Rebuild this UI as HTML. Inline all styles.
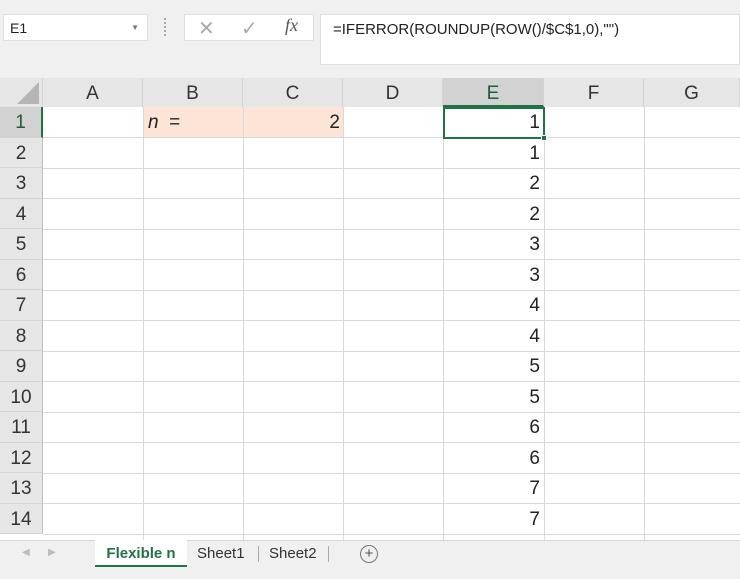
<!DOCTYPE html><html><head><style>
*{margin:0;padding:0;box-sizing:border-box}
body{width:740px;height:579px;overflow:hidden;background:#fff;font-family:"Liberation Sans",Arial,sans-serif;position:relative}
.a{position:absolute}
.ch{position:absolute;top:78px;height:29px;border-right:1px solid #d4d4d4;font-size:19px;color:#333;text-align:center;line-height:31px;background:#e6e6e6}
.rh{position:absolute;left:0;width:43px;height:30.5px;border-bottom:1px solid #d4d4d4;background:#e6e6e6;font-size:19px;color:#333;text-align:center;line-height:31px;border-right:1px solid #bfbfbf}
.vl{position:absolute;top:107px;width:1px;height:433px;background:#dadada}
.hl{position:absolute;left:43px;width:697px;height:1px;background:#dadada}
.num{position:absolute;left:443px;width:97px;text-align:right;font-size:19px;color:#222;line-height:31px}
</style></head><body>
<div class="a" style="left:0;top:0;width:740px;height:78px;background:#f0f0f0"></div>
<div class="a" style="left:3px;top:14px;width:145px;height:27px;background:#fff;border:1px solid #e0e0e0;font-size:14px;line-height:26px;padding-left:6px;color:#222">E1<span style="position:absolute;right:8px;font-size:8px;color:#777">▼</span></div>
<div class="a" style="left:164px;top:18px;width:2px;height:18px;border-left:2px dotted #aaa"></div>
<div class="a" style="left:184px;top:14px;width:130px;height:27px;background:#fff;border:1px solid #e0e0e0"></div>
<div class="a" style="left:198px;top:16px;font-size:20px;color:#aaa">✕</div>
<div class="a" style="left:241px;top:16px;font-size:20px;color:#aaa">✓</div>
<div class="a" style="left:285px;top:15px;font-size:18px;color:#555;font-family:'Liberation Serif',serif;font-style:italic">fx</div>
<div class="a" style="left:320px;top:14px;width:420px;height:51px;background:#fff;border:1px solid #e0e0e0;font-size:15px;padding:6px 0 0 12px;color:#222">=IFERROR(ROUNDUP(ROW()/$C$1,0),"")</div>
<div class="a" style="left:0;top:78px;width:43px;height:29px;background:#e6e6e6;border-right:1px solid #d4d4d4"></div>
<div class="a" style="left:17px;top:82px;width:0;height:0;border-left:22px solid transparent;border-bottom:22px solid #b5b5b5"></div>
<div class="ch" style="left:43px;width:100px">A</div>
<div class="ch" style="left:143px;width:100px">B</div>
<div class="ch" style="left:243px;width:100px">C</div>
<div class="ch" style="left:343px;width:100px">D</div>
<div class="ch" style="left:443px;width:101px;background:#d2d2d2;border-bottom:2px solid #217346;color:#1e5e38">E</div>
<div class="ch" style="left:544px;width:100px">F</div>
<div class="ch" style="left:644px;width:96px">G</div>
<div class="a" style="left:143px;top:107px;width:200px;height:31px;background:#fce4d6"></div>
<div class="vl" style="left:143px"></div><div class="vl" style="left:243px"></div><div class="vl" style="left:343px"></div><div class="vl" style="left:443px"></div><div class="vl" style="left:544px"></div><div class="vl" style="left:644px"></div>
<div class="a" style="left:148px;top:107px;font-size:19px;line-height:31px;color:#222"><i>n</i> &nbsp;=</div>
<div class="a" style="left:243px;top:107px;width:97px;text-align:right;font-size:19px;line-height:31px;color:#222">2</div>
<div id="rows"></div>
<div class="a" style="left:443px;top:107px;width:102px;height:32px;border:2px solid #217346"></div>
<div class="a" style="left:541px;top:135px;width:6px;height:6px;background:#217346;border:1px solid #fff"></div>
<div class="a" style="left:0;top:540px;width:740px;height:28px;background:#f0f0f0;border-top:1px solid #d4d4d4"></div>
<div class="a" style="left:22px;top:547px;font-size:10px;color:#bbb">◀</div>
<div class="a" style="left:48px;top:547px;font-size:10px;color:#bbb">▶</div>
<div class="a" style="left:95px;top:540px;width:92px;height:27px;background:#fff;border-bottom:2px solid #217346;font-size:15px;font-weight:bold;color:#217346;text-align:center;line-height:27px">Flexible n</div>
<div class="a" style="left:197px;top:540px;font-size:15px;color:#333;line-height:28px">Sheet1</div>
<div class="a" style="left:258px;top:546px;width:1px;height:16px;background:#aaa"></div>
<div class="a" style="left:269px;top:540px;font-size:15px;color:#333;line-height:28px">Sheet2</div>
<div class="a" style="left:328px;top:546px;width:1px;height:16px;background:#aaa"></div>
<div class="a" style="left:360px;top:545px;width:18px;height:18px;border:1px solid #777;border-radius:50%;font-size:15px;line-height:16px;text-align:center;color:#555">+</div>
<div class="a" style="left:0;top:568px;width:740px;height:11px;background:#f0f0f0"></div>
<script>
var v=[1,1,2,2,3,3,4,4,5,5,6,6,7,7],h='';
for(var i=0;i<14;i++){var t=107+i*30.5;
h+='<div class="rh" style="top:'+t+'px'+(i==0?';background:#d2d2d2;color:#1e5e38;border-right:2px solid #217346':'')+'">'+(i+1)+'</div>';
h+='<div class="hl" style="top:'+(t+30)+'px"></div>';
h+='<div class="num" style="top:'+t+'px">'+v[i]+'</div>';}
document.getElementById('rows').innerHTML=h;
</script>
</body></html>
